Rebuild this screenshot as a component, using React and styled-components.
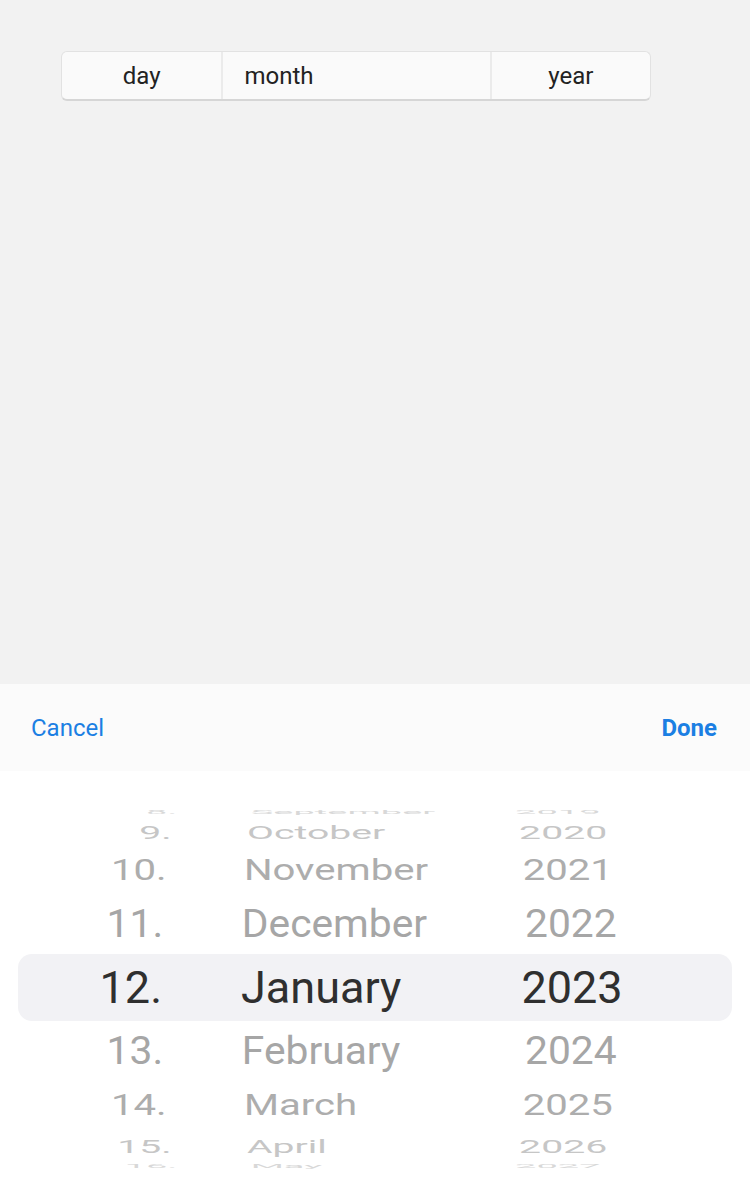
import React from 'react';
import styled, { createGlobalStyle } from 'styled-components';

const GlobalStyle = createGlobalStyle`
    html, body {
        margin : 0;
        padding : 0;
        background : #f2f2f2;
    }
    body {
        font-family : Roboto, "Liberation Sans", sans-serif;
    }
`;

// wheel geometry: rows sit on a cylinder of radius R
const R = 180;
const STEP = 20.5;
const P = 2000;

const days = ['8.', '9.', '10.', '11.', '12.', '13.', '14.', '15.', '16.'];
const months = ['September', 'October', 'November', 'December', 'January', 'February', 'March', 'April', 'May'];
const years = ['2019', '2020', '2021', '2022', '2023', '2024', '2025', '2026', '2027'];
const shades = ['#2f2f2f', '#a6a6a6', '#adadad', '#c6c6c6', '#d8d8d8'];

const rad = (d) => (Math.max(-90, Math.min(90, d)) * Math.PI) / 180;

function rowGeometry(k) {
    const top = R * Math.sin(rad((k - 0.5) * STEP));
    const bottom = R * Math.sin(rad((k + 0.5) * STEP));
    const angle = rad(k * STEP);
    const depth = R * (1 - Math.cos(angle));
    const s = P / (P + depth);
    return {
        height: bottom - top + (k === 0 ? 3 : 0),
        sx: s,
        sy: s * Math.cos(angle),
    };
}

function App() {
    const rows = days.map((d, i) => {
        const k = i - 4;
        return { k, day: d, month: months[i], year: years[i], ...rowGeometry(k) };
    });

    return (
        <Screen>
            <GlobalStyle />
            <Content>
                <Segments>
                    <Segment $width="160px">day</Segment>
                    <Segment $width="269px" $align="left">month</Segment>
                    <Segment $width="161px">year</Segment>
                </Segments>
            </Content>
            <Toolbar>
                <ToolButton>Cancel</ToolButton>
                <ToolButton $bold>Done</ToolButton>
            </Toolbar>
            <Picker>
                <Wheel>
                    {rows.map((r) => {
                        const row = (
                            <Row
                                key={r.k}
                                $h={r.height}
                                $size={r.k === 0 ? 45 : 41}
                                $color={shades[Math.abs(r.k)]}
                                $inset={r.k === 0}
                                style={r.k === 0 ? undefined : { transform: `scale(${r.sx}, ${r.sy})` }}
                            >
                                <DayCell>{r.day}</DayCell>
                                <MonthCell>{r.month}</MonthCell>
                                <YearCell>{r.year}</YearCell>
                            </Row>
                        );
                        return r.k === 0 ? <Highlight key={r.k}>{row}</Highlight> : row;
                    })}
                </Wheel>
            </Picker>
        </Screen>
    );
}

export default App;

const Screen = styled.div`
    display : flex;
    flex-direction : column;
    width : 750px;
    height : 1204px;
    overflow : hidden;
`;

const Content = styled.div`
    height : 684px;
    background : #f2f2f2;
    padding : 51px 0 0 61px;
    box-sizing : border-box;
`;

const Segments = styled.div`
    display : flex;
    width : 590px;
    height : 50px;
    box-sizing : border-box;
    background : #fafafa;
    border : 1px solid #e2e2e2;
    border-bottom : 2px solid #d6d6d6;
    border-radius : 6px;
    overflow : hidden;
`;

const Segment = styled.div`
    display : flex;
    align-items : center;
    justify-content : ${(p) => (p.$align === 'left' ? 'flex-start' : 'center')};
    width : ${(p) => p.$width};
    padding-left : ${(p) => (p.$align === 'left' ? '21px' : '0')};
    box-sizing : border-box;
    font-size : 24px;
    color : #222222;
    & + & {
        border-left : 2px solid #ebebeb;
    }
`;

const Toolbar = styled.div`
    display : flex;
    justify-content : space-between;
    align-items : center;
    height : 87px;
    padding : 0 33px 0 31px;
    background : #fbfbfb;
`;

const ToolButton = styled.div`
    font-size : 24px;
    font-weight : ${(p) => (p.$bold ? 700 : 400)};
    color : #1b7fe3;
`;

const Picker = styled.div`
    flex : 1;
    background : #ffffff;
    padding-top : 35px;
`;

const Wheel = styled.div`
    display : flex;
    flex-direction : column;
    height : 363px;
    overflow : hidden;
`;

const Highlight = styled.div`
    margin : 0 18px;
    border-radius : 14px;
    background : #f2f2f5;
`;

const Row = styled.div`
    display : grid;
    grid-template-columns : 164px 306px 204px;
    align-items : center;
    flex : none;
    height : ${(p) => p.$h}px;
    margin : ${(p) => (p.$inset ? '0 -18px' : '0')};
    font-size : ${(p) => p.$size}px;
    line-height : 1;
    color : ${(p) => p.$color};
    white-space : nowrap;
    transform-origin : 375px 50%;
`;

const DayCell = styled.div`
    text-align : right;
    padding-right : 2px;
`;

const MonthCell = styled.div`
    padding-left : 77px;
`;

const YearCell = styled.div`
    text-align : center;
`;
